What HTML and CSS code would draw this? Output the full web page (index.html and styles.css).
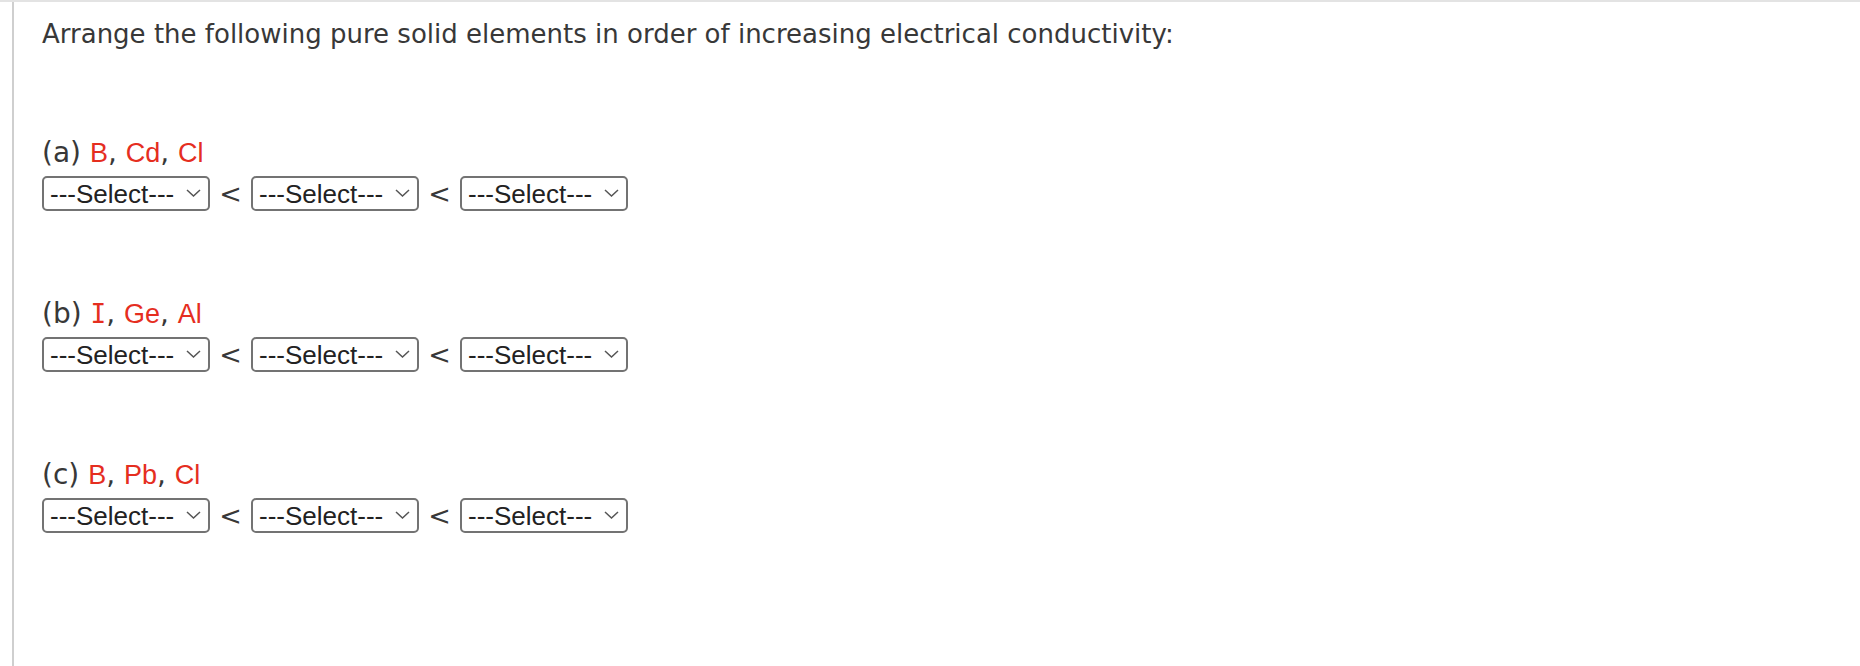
FILE: index.html
```html
<!DOCTYPE html>
<html lang="en">
<head>
  <meta charset="UTF-8">
  <title>Electrical Conductivity</title>
  <link rel="stylesheet" href="styles.css">
</head>
<body>
  <div class="page">
    <div class="question">
      <p class="prompt">Arrange the following pure solid elements in order of increasing electrical conductivity:</p>

      <div class="part">
        <p class="label">(a) <span class="el">B</span>, <span class="el">Cd</span>, <span class="el">Cl</span></p>
        <div class="order">
          <span class="pick"><select><option>---Select---</option></select><svg class="caret" width="15" height="8" viewBox="0 0 15 8"><polyline points="1,1 7.5,7 14,1"/></svg></span>
          <span class="lt">&lt;</span>
          <span class="pick"><select><option>---Select---</option></select><svg class="caret" width="15" height="8" viewBox="0 0 15 8"><polyline points="1,1 7.5,7 14,1"/></svg></span>
          <span class="lt">&lt;</span>
          <span class="pick"><select><option>---Select---</option></select><svg class="caret" width="15" height="8" viewBox="0 0 15 8"><polyline points="1,1 7.5,7 14,1"/></svg></span>
        </div>
      </div>

      <div class="part">
        <p class="label">(b) <span class="el el-i">I</span>, <span class="el">Ge</span>, <span class="el">Al</span></p>
        <div class="order">
          <span class="pick"><select><option>---Select---</option></select><svg class="caret" width="15" height="8" viewBox="0 0 15 8"><polyline points="1,1 7.5,7 14,1"/></svg></span>
          <span class="lt">&lt;</span>
          <span class="pick"><select><option>---Select---</option></select><svg class="caret" width="15" height="8" viewBox="0 0 15 8"><polyline points="1,1 7.5,7 14,1"/></svg></span>
          <span class="lt">&lt;</span>
          <span class="pick"><select><option>---Select---</option></select><svg class="caret" width="15" height="8" viewBox="0 0 15 8"><polyline points="1,1 7.5,7 14,1"/></svg></span>
        </div>
      </div>

      <div class="part">
        <p class="label">(c) <span class="el">B</span>, <span class="el">Pb</span>, <span class="el">Cl</span></p>
        <div class="order">
          <span class="pick"><select><option>---Select---</option></select><svg class="caret" width="15" height="8" viewBox="0 0 15 8"><polyline points="1,1 7.5,7 14,1"/></svg></span>
          <span class="lt">&lt;</span>
          <span class="pick"><select><option>---Select---</option></select><svg class="caret" width="15" height="8" viewBox="0 0 15 8"><polyline points="1,1 7.5,7 14,1"/></svg></span>
          <span class="lt">&lt;</span>
          <span class="pick"><select><option>---Select---</option></select><svg class="caret" width="15" height="8" viewBox="0 0 15 8"><polyline points="1,1 7.5,7 14,1"/></svg></span>
        </div>
      </div>
    </div>
  </div>
</body>
</html>
```

FILE: styles.css
```css
:root {
  --text: #383838;
  --element: #e52e1f;
  --rule-top: #e3e3e3;
  --rule-left: #cfcfcf;
  --field-border: #737373;
}

* {
  margin: 0;
  padding: 0;
  box-sizing: border-box;
}

body {
  font-family: "DejaVu Sans", Verdana, sans-serif;
  font-size: 26px;
  line-height: 30px;
  color: var(--text);
  background: #FFFFFF;
}

.page {
  border-top: 2px solid var(--rule-top);
}

.question {
  margin-left: 12px;
  border-left: 2px solid var(--rule-left);
  padding: 17px 0 0 28px;
  min-height: calc(100vh - 2px);
}

.prompt {
  margin-bottom: 89px;
}

.part + .part {
  margin-top: 88px;
}

.label {
  font-size: 28px;
  margin-bottom: 8px;
}

.el {
  font-family: "Liberation Sans", Arial, sans-serif;
  font-size: 27px;
  color: var(--element);
}

.el-i {
  font-family: "DejaVu Sans Mono", monospace;
  font-size: 26px;
}

.order {
  display: flex;
  align-items: center;
  height: 35px;
}

.pick {
  position: relative;
  display: block;
  width: 168px;
  height: 35px;
}

.pick select {
  appearance: none;
  -webkit-appearance: none;
  width: 100%;
  height: 100%;
  padding: 0 0 0 6px;
  border: 2px solid var(--field-border);
  border-radius: 5px;
  background: #FFFFFF;
  font-family: "Liberation Sans", Arial, sans-serif;
  font-size: 26px;
  color: #222222;
  outline: none;
}

.caret {
  position: absolute;
  right: 9px;
  top: 13px;
  pointer-events: none;
}

.caret polyline {
  fill: none;
  stroke: #555555;
  stroke-width: 1.5;
}

.lt {
  width: 41px;
  text-align: center;
  font-size: 27px;
  line-height: 30px;
}
```
